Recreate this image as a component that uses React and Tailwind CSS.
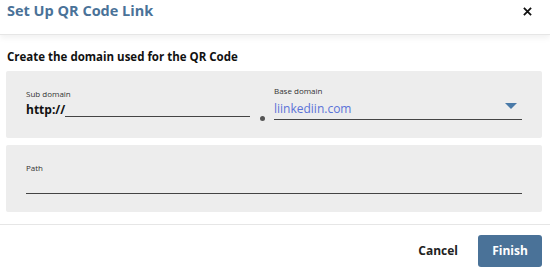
export default function App() {
  return (
    <div className="w-[550px] h-[277px] bg-white relative overflow-hidden" style={{ fontFamily: '"Open Sans", "Liberation Sans", sans-serif' }}>
      {/* header */}
      <div className="h-[35px] flex items-center justify-between pl-[7px] pr-[18px] border-b border-[#e6e6e6] shadow-[0_3px_6px_rgba(0,0,0,0.06)]">
        <span className="text-[14.5px] font-bold text-[#4a7298] -mt-[12px]">Set Up QR Code Link</span>
        <svg width="9" height="9" viewBox="0 0 10 10" className="-mt-[12px]">
          <path d="M1 1L9 9M9 1L1 9" stroke="#111" strokeWidth="2" />
        </svg>
      </div>

      {/* body */}
      <div className="pt-[14px]">
        <div className="pl-[7px] text-[11.5px] font-bold text-[#111] leading-[16px]">Create the domain used for the QR Code</div>

        <div className="ml-[6px] mr-[8px] mt-[6px] h-[67px] bg-[#ededed] rounded-[2px] flex px-[20px]">
          <div className="w-[224px] pt-[18px]">
            <div className="text-[8px] text-[#333] leading-[10px]">Sub domain</div>
            <div className="flex items-end mt-[3px]">
              <span className="text-[12px] font-bold text-[#111] leading-[16px]">http://</span>
              <div className="flex-1 border-b border-[#444] mb-[1px]"></div>
            </div>
          </div>
          <div className="w-[24px] flex justify-center pt-[45px]">
            <div className="w-[5px] h-[5px] rounded-full bg-[#555]"></div>
          </div>
          <div className="flex-1 pt-[15px]">
            <div className="text-[8px] text-[#333] leading-[10px]">Base domain</div>
            <div className="flex items-center justify-between border-b border-[#444] mt-[3px] h-[21px]">
              <span className="text-[12px] text-[#5b73d8] leading-[16px]">liinkediin.com</span>
              <svg width="12" height="6" viewBox="0 0 12 6" className="mr-[5px] -mt-[6px]">
                <path d="M0 0H12L6 6Z" fill="#4a7aa8" />
              </svg>
            </div>
          </div>
        </div>

        <div className="ml-[6px] mr-[8px] mt-[7px] h-[67px] bg-[#ededed] rounded-[2px] px-[20px] pt-[18px]">
          <div className="text-[8px] text-[#333] leading-[10px]">Path</div>
          <div className="border-b border-[#444] h-[21px]"></div>
        </div>
      </div>

      {/* footer */}
      <div className="absolute left-0 right-0 top-[224px] border-t border-[#e6e6e6] h-[53px] flex items-center justify-end pr-[8px] gap-[20px]">
        <span className="text-[12px] font-bold text-[#222]">Cancel</span>
        <button className="w-[64px] h-[32px] rounded-[3px] bg-[#4a7298] text-white text-[12px] font-bold">Finish</button>
      </div>
    </div>
  );
}
